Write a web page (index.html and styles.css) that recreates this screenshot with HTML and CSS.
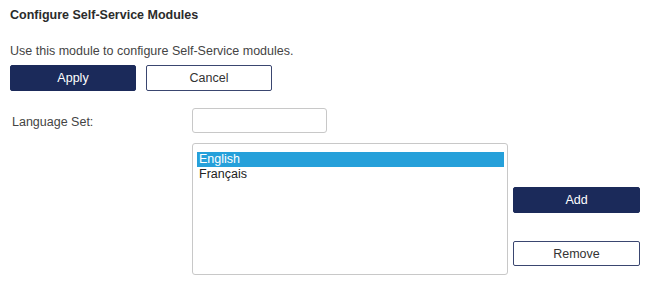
FILE: index.html
```html
<!DOCTYPE html>
<html lang="en">
<head>
    <meta charset="UTF-8">
    <title>Configure Self-Service Modules</title>
    <link rel="stylesheet" href="styles.css">
</head>
<body>
    <div class="page">
        <h1 class="title">Configure Self-Service Modules</h1>
        <p class="intro">Use this module to configure Self-Service modules.</p>

        <div class="actions">
            <button type="button" class="btn btn-primary">Apply</button>
            <button type="button" class="btn btn-outline">Cancel</button>
        </div>

        <!-- Language set -->
        <div class="field-row">
            <label class="field-label" for="langSet">Language Set:</label>
            <input type="text" id="langSet" class="text-input">
        </div>

        <div class="list-row">
            <div class="listbox">
                <div class="list-option selected">English</div>
                <div class="list-option">Français</div>
            </div>
            <div class="list-buttons">
                <button type="button" class="btn btn-primary">Add</button>
                <button type="button" class="btn btn-outline">Remove</button>
            </div>
        </div>
    </div>
</body>
</html>
```

FILE: styles.css
```css
/* Base */
body {
    margin: 0;
    font-family: "Liberation Sans", Arial, sans-serif;
    font-size: 12.5px;
    color: #333;
    background: #fff;
}

.page {
    padding: 8px 10px;
}

.title {
    margin: 0;
    font-size: 12.5px;
    line-height: 14px;
    font-weight: bold;
    color: #2b2b2b;
}

.intro {
    margin: 22px 0 0;
    line-height: 14px;
    color: #444;
}

/* Buttons */
.actions {
    display: flex;
    gap: 10px;
    margin-top: 7px;
}

.btn {
    width: 126px;
    height: 26px;
    padding: 0;
    font-family: inherit;
    font-size: 12.5px;
    border-radius: 2px;
    cursor: pointer;
    box-sizing: border-box;
}

.btn-primary {
    background-color: #1b2a5a;
    border: 1px solid #1b2a5a;
    color: #fff;
}

.btn-outline {
    background-color: #fff;
    border: 1px solid #3a4670;
    color: #333;
}

/* Form rows */
.field-row {
    display: flex;
    align-items: center;
    margin-top: 17px;
}

.field-label {
    width: 180px;
    padding-left: 2px;
    padding-top: 3px;
    color: #444;
}

.text-input {
    width: 135px;
    height: 25px;
    margin: 0;
    border: 1px solid #c8c8c8;
    border-radius: 3px;
    box-sizing: border-box;
}

.list-row {
    display: flex;
    gap: 5px;
    margin-top: 10px;
    margin-left: 182px;
}

.listbox {
    width: 316px;
    height: 132px;
    padding: 8px 3px 0 4px;
    border: 1px solid #c8c8c8;
    border-radius: 3px;
    box-sizing: border-box;
}

.list-option {
    height: 15px;
    line-height: 15px;
    padding-left: 2px;
    color: #222;
}

.list-option.selected {
    background-color: #26a0da;
    color: #fff;
}

.list-buttons {
    display: flex;
    flex-direction: column;
    gap: 28px;
    padding-top: 44px;
}

.list-buttons .btn {
    width: 127px;
    height: 26px;
}

.list-buttons .btn-outline {
    height: 25px;
}
```
